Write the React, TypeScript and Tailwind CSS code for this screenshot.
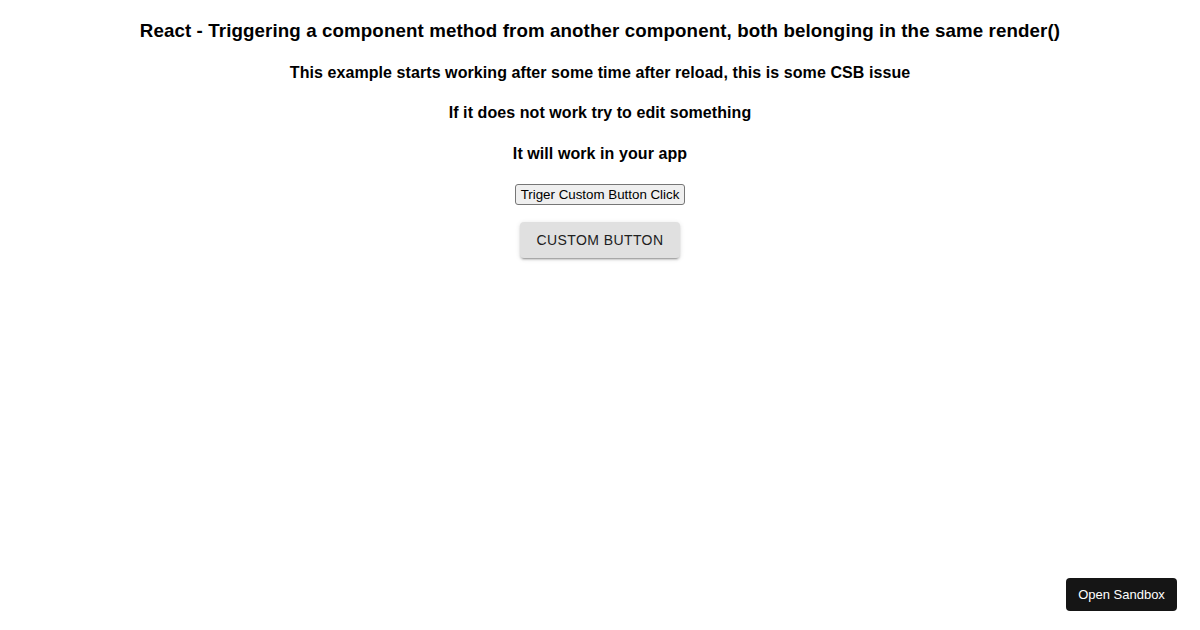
import React from 'react';

const font = { fontFamily: '"Liberation Sans", Arial, Helvetica, sans-serif' };

const CustomButton: React.FC = () => (
  <button
    type="button"
    className="h-[36px] px-[17px] rounded-[4px] bg-[#e0e0e0] text-[#212121] text-[14px] leading-[24px] tracking-[0.4px] uppercase shadow-[0px_3px_1px_-2px_rgba(0,0,0,0.2),0px_2px_2px_0px_rgba(0,0,0,0.14),0px_1px_5px_0px_rgba(0,0,0,0.12)]"
  >
    Custom Button
  </button>
);

export default function App() {
  return (
    <div className="min-h-[630px] bg-white text-black" style={font}>
      <div className="flex flex-col items-center text-center">
        <h3 className="mt-[20px] text-[18.72px] leading-[21.5px] font-bold tracking-[0.115px]">
          React - Triggering a component method from another component, both belonging in the same render()
        </h3>
        <h4 className="mt-[21px] text-[16px] leading-[19px] font-bold tracking-[0.075px]">
          This example starts working after some time after reload, this is some CSB issue
        </h4>
        <h4 className="mt-[21.5px] text-[16px] leading-[19px] font-bold tracking-[0.075px]">
          If it does not work try to edit something
        </h4>
        <h4 className="mt-[21.5px] text-[16px] leading-[19px] font-bold tracking-[0.075px]">
          It will work in your app
        </h4>
        <button
          type="button"
          className="mt-[21px] h-[21px] px-[5px] border border-[#767676] rounded-[3px] bg-[#efefef] text-[13.33px] leading-[15px] text-black"
        >
          Triger Custom Button Click
        </button>
        <div className="mt-[17px]">
          <CustomButton />
        </div>
      </div>
      <a
        href="#"
        className="fixed right-[23px] bottom-[19px] flex items-center justify-center w-[111px] h-[33px] rounded-[4px] bg-[#151515] text-white text-[13px]"
      >
        Open Sandbox
      </a>
    </div>
  );
}
